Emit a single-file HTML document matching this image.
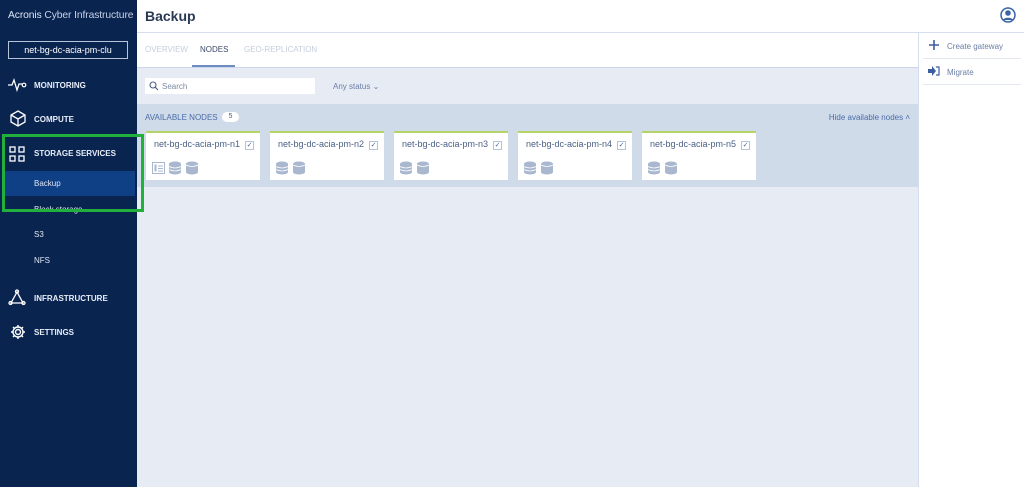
<!DOCTYPE html>
<html><head><style>
*{margin:0;padding:0;box-sizing:border-box}
body{width:1024px;height:487px;overflow:hidden;font-family:"Liberation Sans",sans-serif;background:#e6ebf4;position:relative}
.sb{position:absolute;left:0;top:0;width:137px;height:487px;background:#0a2450;color:#fff}
.logo{position:absolute;left:8px;top:10px;font-size:10.3px;color:#dfe6f2;white-space:nowrap;letter-spacing:-0.1px}
.clu{position:absolute;left:8px;top:41px;width:120px;height:18px;border:1px solid #b8c4d8;font-size:9px;text-align:center;line-height:16px}
.it{position:absolute;left:34px;font-size:8px;font-weight:bold;color:#e8eef8}
.sub{position:absolute;left:34px;font-size:8px;color:#dfe6f2}
.sel{position:absolute;left:4px;top:171px;width:131px;height:25px;background:#0f3f85}
.green{position:absolute;left:2px;top:134px;width:142px;height:78px;border:3px solid #22b03c;z-index:10}
.ic{position:absolute;left:8px}
.hdr{position:absolute;left:137px;top:0;right:0;height:33px;background:#fff;border-bottom:1px solid #d5deec}
.hdr h1{position:absolute;left:8px;top:8px;font-size:14px;font-weight:bold;color:#2a3a55}
.tabs{position:absolute;left:137px;top:33px;width:781px;height:35px;background:#fff;border-bottom:1px solid #c9d5e8;font-size:8px}
.tabs span{position:absolute;top:12px;color:#c5cedd}
.right{position:absolute;left:918px;top:33px;width:106px;height:454px;background:#fff;border-left:1px solid #d5deec;font-size:8px;color:#6a7fa5}
.search{position:absolute;left:145px;top:78px;width:170px;height:16px;background:#fff;font-size:8px;color:#7b8aa3}
.band{position:absolute;left:137px;top:104px;width:781px;height:83px;background:#d0dbea}
.card{position:absolute;top:131px;width:114px;height:49px;background:#fff;border-top:2px solid #b7d46a}
.card .t{position:absolute;left:8px;top:6px;font-size:9px;color:#4a5f85;white-space:nowrap}
.cb{position:absolute;right:6px;top:8px;width:9px;height:9px;border:1px solid #b5c3d9;font-size:7px;color:#3b5fa0;line-height:7px;text-align:center}
.db{position:absolute;top:28px}
</style></head><body>
<svg width="0" height="0" style="position:absolute"><defs>
<g id="d1"><ellipse cx="6" cy="3" rx="6" ry="2.5" fill="#a9b8cf"/><rect x="0" y="3" width="12" height="8" fill="#a9b8cf"/><ellipse cx="6" cy="11" rx="6" ry="2.5" fill="#a9b8cf"/><path d="M0 5.5q6 3 12 0M0 8.5q6 3 12 0" stroke="#fff" stroke-width=".8" fill="none"/></g>
<g id="d2"><ellipse cx="6" cy="3" rx="6" ry="2.5" fill="#a9b8cf"/><rect x="0" y="3" width="12" height="8" fill="#a9b8cf"/><ellipse cx="6" cy="11" rx="6" ry="2.5" fill="#a9b8cf"/><path d="M0 4q6 3 12 0" stroke="#fff" stroke-width=".8" fill="none"/></g>
</defs></svg>
<div class="sb">
<div class="logo">Acronis <span style="color:#c7d2e6">Cyber Infrastructure</span></div>
<div class="clu">net-bg-dc-acia-pm-clu</div>
<svg class="ic" style="top:77px" width="20" height="16" viewBox="0 0 20 16"><path d="M0 8h4l2-5 3 10 2-6h3" fill="none" stroke="#fff" stroke-width="1.3"/><circle cx="16" cy="8" r="1.8" fill="none" stroke="#fff" stroke-width="1.2"/></svg>
<div class="it" style="top:81px">MONITORING</div>
<svg class="ic" style="top:110px;left:10px" width="16" height="17" viewBox="0 0 16 17"><path d="M8 1l7 4v7l-7 4-7-4V5z M1 5l7 4 7-4 M8 9v7" fill="none" stroke="#fff" stroke-width="1.3"/></svg>
<div class="it" style="top:115px">COMPUTE</div>
<div class="sel"></div>
<svg class="ic" style="top:146px;left:9px" width="16" height="16" viewBox="0 0 16 16" fill="none" stroke="#fff" stroke-width="1.3"><rect x="1" y="1" width="5" height="5"/><rect x="10" y="1" width="5" height="5"/><rect x="1" y="10" width="5" height="5"/><rect x="10" y="10" width="5" height="5"/></svg>
<div class="it" style="top:149px">STORAGE SERVICES</div>
<div class="sub" style="top:179px">Backup</div>
<div class="sub" style="top:205px">Block storage</div>
<div class="sub" style="top:230px">S3</div>
<div class="sub" style="top:256px">NFS</div>
<svg class="ic" style="top:289px" width="18" height="17" viewBox="0 0 18 17" fill="none" stroke="#fff" stroke-width="1.3"><path d="M9 3L3 14h12z"/><circle cx="9" cy="2.5" r="1.5"/><circle cx="2.5" cy="14" r="1.5"/><circle cx="15.5" cy="14" r="1.5"/></svg>
<div class="it" style="top:294px">INFRASTRUCTURE</div>
<svg class="ic" style="top:324px;left:10px" width="16" height="16" viewBox="0 0 16 16" fill="none" stroke="#fff" stroke-width="1.4"><circle cx="8" cy="8" r="2.5"/><path d="M8 1v2M8 13v2M1 8h2M13 8h2M3 3l1.5 1.5M11.5 11.5L13 13M3 13l1.5-1.5M11.5 4.5L13 3"/><circle cx="8" cy="8" r="5"/></svg>
<div class="it" style="top:328px">SETTINGS</div>
</div>
<div class="hdr"><h1>Backup</h1>
<svg style="position:absolute;right:8px;top:7px" width="16" height="16" viewBox="0 0 16 16"><circle cx="8" cy="8" r="7" fill="#fff" stroke="#3a63a8" stroke-width="1.5"/><circle cx="8" cy="6" r="2.8" fill="#3a63a8"/><path d="M3 13c1-3 9-3 10 0" fill="#3a63a8"/></svg></div>
<div class="tabs"><span style="left:8px">OVERVIEW</span><span style="left:63px;color:#3a4a66">NODES</span><span style="left:107px">GEO-REPLICATION</span>
<div style="position:absolute;left:55px;top:32px;width:43px;height:2px;background:#6f8cc0"></div></div>
<div class="right">
<svg style="position:absolute;left:10px;top:7px" width="10" height="10"><path d="M5 0v10M0 5h10" stroke="#3b5fa0" stroke-width="1.6"/></svg>
<div style="position:absolute;left:28px;top:9px">Create gateway</div>
<div style="position:absolute;left:4px;top:25px;width:98px;border-top:1px solid #e3e8f0"></div>
<svg style="position:absolute;left:9px;top:33px" width="12" height="10" viewBox="0 0 12 10"><path d="M0 3h4V0l4 5-4 5V7H0z" fill="#3b5fa0"/><path d="M8 1h3v8H8" fill="none" stroke="#3b5fa0" stroke-width="1.2"/></svg>
<div style="position:absolute;left:28px;top:35px">Migrate</div>
<div style="position:absolute;left:4px;top:51px;width:98px;border-top:1px solid #e3e8f0"></div>
</div>
<div class="search"><svg style="position:absolute;left:4px;top:3px" width="10" height="10" viewBox="0 0 10 10"><circle cx="4" cy="4" r="3" fill="none" stroke="#4a5f85" stroke-width="1.1"/><path d="M6.3 6.3L9 9" stroke="#4a5f85" stroke-width="1.1"/></svg><span style="position:absolute;left:17px;top:4px">Search</span></div>
<div style="position:absolute;left:333px;top:82px;font-size:8px;color:#6a7fa5">Any status ⌄</div>
<div class="band">
<div style="position:absolute;left:8px;top:9px;font-size:8px;color:#4a6ca8">AVAILABLE NODES</div>
<div style="position:absolute;left:85px;top:8px;width:17px;height:10px;border-radius:5px;background:#fff;font-size:7px;text-align:center;line-height:10px;color:#4a5f85">5</div>
<div style="position:absolute;right:8px;top:9px;font-size:8px;color:#4a6ca8">Hide available nodes ˄</div>
</div>
<div class="card" style="left:146px"><div class="t">net-bg-dc-acia-pm-n1</div><div class="cb">✓</div><svg class="db" style="left:6px" width="13" height="14"><rect x=".5" y="1.5" width="12" height="11" fill="#fff" stroke="#a9b8cf"/><rect x="2.5" y="3.5" width="2" height="7" fill="#a9b8cf"/><path d="M6 5h5M6 7.5h5M6 10h5" stroke="#a9b8cf"/></svg><svg class="db" style="left:23px" width="12" height="14"><use href="#d1"/></svg><svg class="db" style="left:40px" width="12" height="14"><use href="#d2"/></svg></div>
<div class="card" style="left:270px"><div class="t">net-bg-dc-acia-pm-n2</div><div class="cb">✓</div><svg class="db" style="left:6px" width="12" height="14"><use href="#d1"/></svg><svg class="db" style="left:23px" width="12" height="14"><use href="#d2"/></svg></div>
<div class="card" style="left:394px"><div class="t">net-bg-dc-acia-pm-n3</div><div class="cb">✓</div><svg class="db" style="left:6px" width="12" height="14"><use href="#d1"/></svg><svg class="db" style="left:23px" width="12" height="14"><use href="#d2"/></svg></div>
<div class="card" style="left:518px"><div class="t">net-bg-dc-acia-pm-n4</div><div class="cb">✓</div><svg class="db" style="left:6px" width="12" height="14"><use href="#d1"/></svg><svg class="db" style="left:23px" width="12" height="14"><use href="#d2"/></svg></div>
<div class="card" style="left:642px"><div class="t">net-bg-dc-acia-pm-n5</div><div class="cb">✓</div><svg class="db" style="left:6px" width="12" height="14"><use href="#d1"/></svg><svg class="db" style="left:23px" width="12" height="14"><use href="#d2"/></svg></div>
<div class="green"></div>
</body></html>
